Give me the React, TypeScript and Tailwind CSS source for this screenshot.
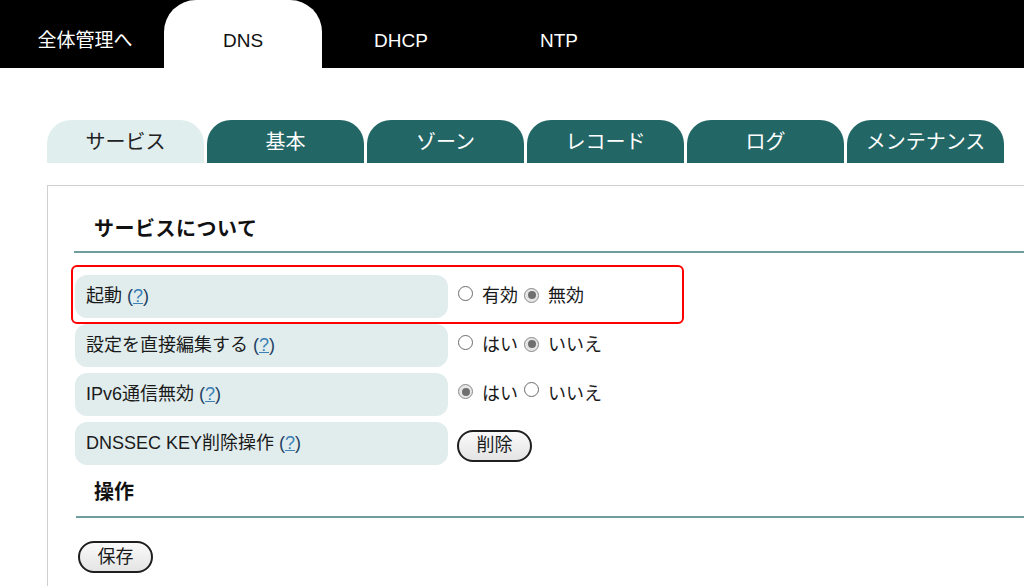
import React from "react";

const font = "font-['Liberation_Sans','Noto_Sans_CJK_JP',sans-serif]";

function Radio({ checked }: { checked: boolean }) {
  return (
    <span
      className={`inline-flex items-center justify-center w-[15px] h-[15px] rounded-full border ${
        checked ? "border-[#8a8a8a] bg-[#e6e6e6]" : "border-[#6b6b6b] bg-white"
      } -translate-y-[3px]`}
    >
      {checked && <span className="w-[8px] h-[8px] rounded-full bg-[#6f6f6f]" />}
    </span>
  );
}

function Help() {
  return (
    <span className="ml-[5px] text-[#1f3f63]">
      (<span className="text-[#3b7fb5] underline">?</span>)
    </span>
  );
}

function Options({ a, b, first }: { a: string; b: string; first: boolean }) {
  return (
    <div className="flex items-center ml-[10px] text-[18px] text-[#1a1a1a]">
      <Radio checked={first} />
      <span className="ml-[9px]">{a}</span>
      <span className="ml-[6px]">
        <Radio checked={!first} />
      </span>
      <span className="ml-[9px]">{b}</span>
    </div>
  );
}

function Row({ label, children, boxed }: { label: string; children: React.ReactNode; boxed?: boolean }) {
  return (
    <div className="relative flex items-center">
      {boxed && (
        <div className="absolute -left-[4px] -top-[10px] w-[613px] h-[59px] border-2 border-[#ff0000] rounded-[6px]" />
      )}
      <div className="w-[373px] h-[43px] rounded-[12px] bg-[#e1eded] pl-[11px] flex items-center text-[18px] text-[#1a1a1a]">
        {label}
        <Help />
      </div>
      {children}
    </div>
  );
}

function PillButton({ text }: { text: string }) {
  return (
    <button className="w-[75px] h-[32px] rounded-full border-2 border-[#1f1f1f] bg-gradient-to-b from-[#fafafa] to-[#e4e4e4] text-[18px] text-[#1a1a1a] flex items-center justify-center">
      {text}
    </button>
  );
}

export default function App() {
  const topTabs = ["全体管理へ", "DNS", "DHCP", "NTP"];
  const subTabs = ["サービス", "基本", "ゾーン", "レコード", "ログ", "メンテナンス"];
  return (
    <div className={`w-[1024px] h-[586px] overflow-hidden bg-white ${font}`}>
      <div className="flex h-[68px] bg-black pl-[6px]">
        {topTabs.map((t) => (
          <div
            key={t}
            className={`w-[158px] flex items-center justify-center text-[19px] pt-[14px] ${
              t === "DNS" ? "bg-white text-[#111] rounded-t-[32px]" : "text-white"
            }`}
          >
            {t}
          </div>
        ))}
      </div>

      <div className="flex mt-[52px] pl-[47px] gap-[3px]">
        {subTabs.map((t, i) => (
          <div
            key={t}
            className={`w-[157px] h-[43px] rounded-t-[24px] flex items-center justify-center text-[20px] ${
              i === 0 ? "bg-[#e1eeee] text-[#222]" : "bg-[#236666] text-white"
            }`}
          >
            {t}
          </div>
        ))}
      </div>

      <div className="mt-[22px] ml-[47px] w-[1010px] h-[420px] border border-[#d0d0d0] pl-[26px]">
        <div className="pt-[32px] pb-[11px] pl-[20px] border-b-2 border-[#6f9d9d] text-[20px] tracking-[0.5px] font-bold leading-[22px] text-[#111]">
          サービスについて
        </div>

        <div className="mt-[22px] ml-[1px] flex flex-col gap-[6px]">
          <Row label="起動" boxed>
            <Options a="有効" b="無効" first={false} />
          </Row>
          <Row label="設定を直接編集する">
            <Options a="はい" b="いいえ" first={false} />
          </Row>
          <Row label="IPv6通信無効">
            <Options a="はい" b="いいえ" first={true} />
          </Row>
          <Row label="DNSSEC KEY削除操作">
            <div className="ml-[9px] mt-[4px]">
              <PillButton text="削除" />
            </div>
          </Row>
        </div>

        <div className="mt-[16px] ml-[2px] pb-[13px] pl-[18px] border-b-2 border-[#6f9d9d] text-[20px] font-bold leading-[22px] text-[#111]">
          操作
        </div>

        <div className="mt-[23px] ml-[4px]">
          <PillButton text="保存" />
        </div>
      </div>
    </div>
  );
}
